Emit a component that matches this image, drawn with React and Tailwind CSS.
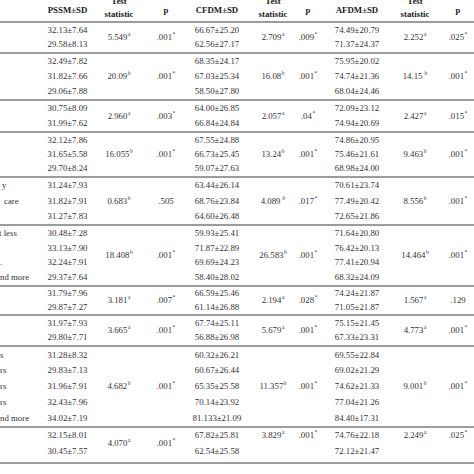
import React from "react";

// column widths, chosen so each cell centre lands where the scan has it
const cols = {
  label: "w-[45px]",
  pssm: "w-[45px]",
  t1: "w-[58px]",
  p1: "w-[36px]",
  cfdm: "w-[66px]",
  t2: "w-[46px]",
  p2: "w-[24px]",
  afdm: "w-[74px]",
  t3: "w-[42px]",
  p3: "w-[44px]",
};

const groups = [
  {
    h: "h-[29px]",
    labels: [],
    pssm: ["32.13±7.64", "29.58±8.13"],
    t1: ["5.549", "a"], p1: [".001", true],
    cfdm: ["66.67±25.20", "62.56±27.17"],
    t2: ["2.709", "a"], p2: [".009", true],
    afdm: ["74.49±20.79", "71.37±24.37"],
    t3: ["2.252", "a"], p3: [".025", true],
  },
  {
    h: "h-[45px]",
    labels: [],
    pssm: ["32.49±7.82", "31.82±7.66", "29.06±7.88"],
    t1: ["20.09", "b"], p1: [".001", true],
    cfdm: ["68.35±24.17", "67.03±25.34", "58.50±27.80"],
    t2: ["16.08", "b"], p2: [".001", true],
    afdm: ["75.95±20.02", "74.74±21.36", "68.04±24.46"],
    t3: ["14.15", "b", true], p3: [".001", true],
  },
  {
    h: "h-[30px]",
    labels: [],
    pssm: ["30.75±8.09", "31.99±7.62"],
    t1: ["2.960", "a"], p1: [".003", true],
    cfdm: ["64.00±26.85", "66.84±24.84"],
    t2: ["2.057", "a"], p2: [".04", true],
    afdm: ["72.09±23.12", "74.94±20.69"],
    t3: ["2.427", "a"], p3: [".015", true],
  },
  {
    h: "h-[43px]",
    labels: [],
    pssm: ["32.12±7.86", "31.65±5.58", "29.70±8.24"],
    t1: ["16.055", "b"], p1: [".001", true],
    cfdm: ["67.55±24.88", "66.73±25.45", "59.07±27.63"],
    t2: ["13.24", "b"], p2: [".001", true],
    afdm: ["74.86±20.95", "75.46±21.61", "68.98±24.00"],
    t3: ["9.463", "b"], p3: [".001", true],
  },
  {
    h: "h-[46px]",
    labels: [["y", "pl-[2px]"], ["care", "pl-[4px]"], ["", ""]],
    pssm: ["31.24±7.93", "31.82±7.91", "31.27±7.83"],
    t1: ["0.683", "b"], p1: [".505", false],
    cfdm: ["63.44±26.14", "68.76±23.84", "64.60±26.48"],
    t2: ["4.089", "b", true], p2: [".017", true],
    afdm: ["70.61±23.74", "77.49±20.42", "72.65±21.86"],
    t3: ["8.556", "b"], p3: [".001", true],
  },
  {
    h: "h-[59px]",
    labels: [["t less", "-ml-[1px]"], ["", ""], [".", ""], ["nd more", ""]],
    pssm: ["30.48±7.28", "33.13±7.90", "32.24±7.91", "29.37±7.64"],
    t1: ["18.408", "b"], p1: [".001", true],
    cfdm: ["59.93±25.41", "71.87±22.89", "69.69±24.23", "58.40±28.02"],
    t2: ["26.583", "b"], p2: [".001", true],
    afdm: ["71.64±20.80", "76.42±20.13", "77.41±20.94", "68.32±24.09"],
    t3: ["14.464", "b"], p3: [".001", true],
  },
  {
    h: "h-[27px]",
    labels: [],
    pssm: ["31.79±7.96", "29.87±7.27"],
    t1: ["3.181", "a"], p1: [".007", true],
    cfdm: ["66.59±25.46", "61.14±26.88"],
    t2: ["2.194", "a"], p2: [".028", true],
    afdm: ["74.24±21.87", "71.05±21.87"],
    t3: ["1.567", "a"], p3: [".129", false],
  },
  {
    h: "h-[29px]",
    labels: [],
    pssm: ["31.97±7.93", "29.80±7.71"],
    t1: ["3.665", "a"], p1: [".001", true],
    cfdm: ["67.74±25.11", "56.88±26.98"],
    t2: ["5.679", "a"], p2: [".001", true],
    afdm: ["75.15±21.45", "67.33±23.31"],
    t3: ["4.773", "a"], p3: [".001", true],
  },
  {
    h: "h-[79px]",
    labels: [["s", ""], ["rs", ""], ["rs", ""], ["rs", ""], ["nd more", ""]],
    pssm: ["31.28±8.32", "29.83±7.13", "31.96±7.91", "32.43±7.96", "34.02±7.19"],
    t1: ["4.682", "b"], p1: [".001", true],
    cfdm: ["60.32±26.21", "60.67±26.44", "65.35±25.58", "70.14±23.92", "81.133±21.09"],
    t2: ["11.357", "b"], p2: [".001", true],
    afdm: ["69.55±22.84", "69.02±21.29", "74.62±21.33", "77.04±21.26", "84.40±17.31"],
    t3: ["9.001", "b"], p3: [".001", true],
  },
  {
    h: "h-[34px]",
    labels: [],
    pssm: ["32.15±8.01", "30.45±7.57"],
    t1: ["4.070", "a"], p1: [".001", true],
    cfdm: ["67.82±25.81", "62.54±25.58"],
    t2: ["3.829", "a"], p2: [".001", true],
    afdm: ["74.76±22.18", "72.12±21.47"],
    t3: ["2.249", "a"], p3: [".025", true],
    firstRow: true,
  },
];

const Sup = ({ children, gap }) => (
  <sup className={`text-[5.5px] top-[-3.5px] ${gap ? "ml-[2px]" : "ml-[0.5px]"}`}>{children}</sup>
);

const Line = () => <div className="h-[2px] w-full bg-[#9c9c9c]" />;

const Values = ({ w, items }) => (
  <div className={`${w} shrink-0 flex flex-col`}>
    {items.map((v, i) => (
      <div key={i} className="flex-1 flex items-center justify-center whitespace-nowrap">
        {v}
      </div>
    ))}
  </div>
);

// a statistic that spans the whole group, or sits on the first row only
const Single = ({ w, rows, top, children }) => (
  <div className={`${w} shrink-0 flex flex-col`}>
    <div className={`${top ? "flex-1" : "flex-[100]"} flex items-center justify-center whitespace-nowrap`}>
      {children}
    </div>
    {top && Array.from({ length: rows - 1 }).map((_, i) => <div key={i} className="flex-1" />)}
  </div>
);

const Stat = ({ s }) => (
  <>
    {s[0]}
    <Sup gap={s[2]}>{s[1]}</Sup>
  </>
);

const P = ({ p }) => (
  <>
    {p[0]}
    {p[1] && <Sup>*</Sup>}
  </>
);

const Group = ({ g }) => {
  const n = g.pssm.length;
  const top = !!g.firstRow;
  return (
    <div className={`flex ${g.h} ${top ? "pb-[3px]" : ""}`}>
      <div className={`${cols.label} shrink-0 flex flex-col overflow-hidden`}>
        {g.labels.map(([t, c], i) => (
          <div key={i} className={`flex-1 flex items-center whitespace-nowrap ${c}`}>
            {t}
          </div>
        ))}
      </div>
      <Values w={cols.pssm} items={g.pssm} />
      <Single w={cols.t1} rows={n}><Stat s={g.t1} /></Single>
      <Single w={cols.p1} rows={n}><P p={g.p1} /></Single>
      <Values w={cols.cfdm} items={g.cfdm} />
      <Single w={cols.t2} rows={n} top={top}><Stat s={g.t2} /></Single>
      <Single w={cols.p2} rows={n} top={top}><P p={g.p2} /></Single>
      <Values w={cols.afdm} items={g.afdm} />
      <Single w={cols.t3} rows={n} top={top}><Stat s={g.t3} /></Single>
      <Single w={cols.p3} rows={n} top={top}><P p={g.p3} /></Single>
    </div>
  );
};

const TwoLine = ({ w }) => (
  <div className={`${w} shrink-0 flex flex-col items-center self-end leading-[13px] whitespace-nowrap`}>
    <span>Test</span>
    <span>statistic</span>
  </div>
);

const Head = ({ w, children }) => (
  <div className={`${w} shrink-0 flex justify-center whitespace-nowrap`}>{children}</div>
);

export default function App() {
  return (
    <div className="w-[474px] h-[474px] overflow-hidden bg-white text-[#333] font-['Liberation_Serif',serif] text-[8.8px] leading-none">
      <div className="flex h-[21px] items-center font-bold text-[#1a1a1a] overflow-hidden">
        <div className={`${cols.label} shrink-0`} />
        <Head w={cols.pssm}>PSSM±SD</Head>
        <TwoLine w={cols.t1} />
        <Head w={cols.p1}>p</Head>
        <Head w={cols.cfdm}>CFDM±SD</Head>
        <TwoLine w={cols.t2} />
        <Head w={cols.p2}>p</Head>
        <Head w={cols.afdm}>AFDM±SD</Head>
        <TwoLine w={cols.t3} />
        <Head w={cols.p3}>p</Head>
      </div>
      <Line />
      {groups.map((g, i) => (
        <React.Fragment key={i}>
          <Group g={g} />
          <Line />
        </React.Fragment>
      ))}
    </div>
  );
}
